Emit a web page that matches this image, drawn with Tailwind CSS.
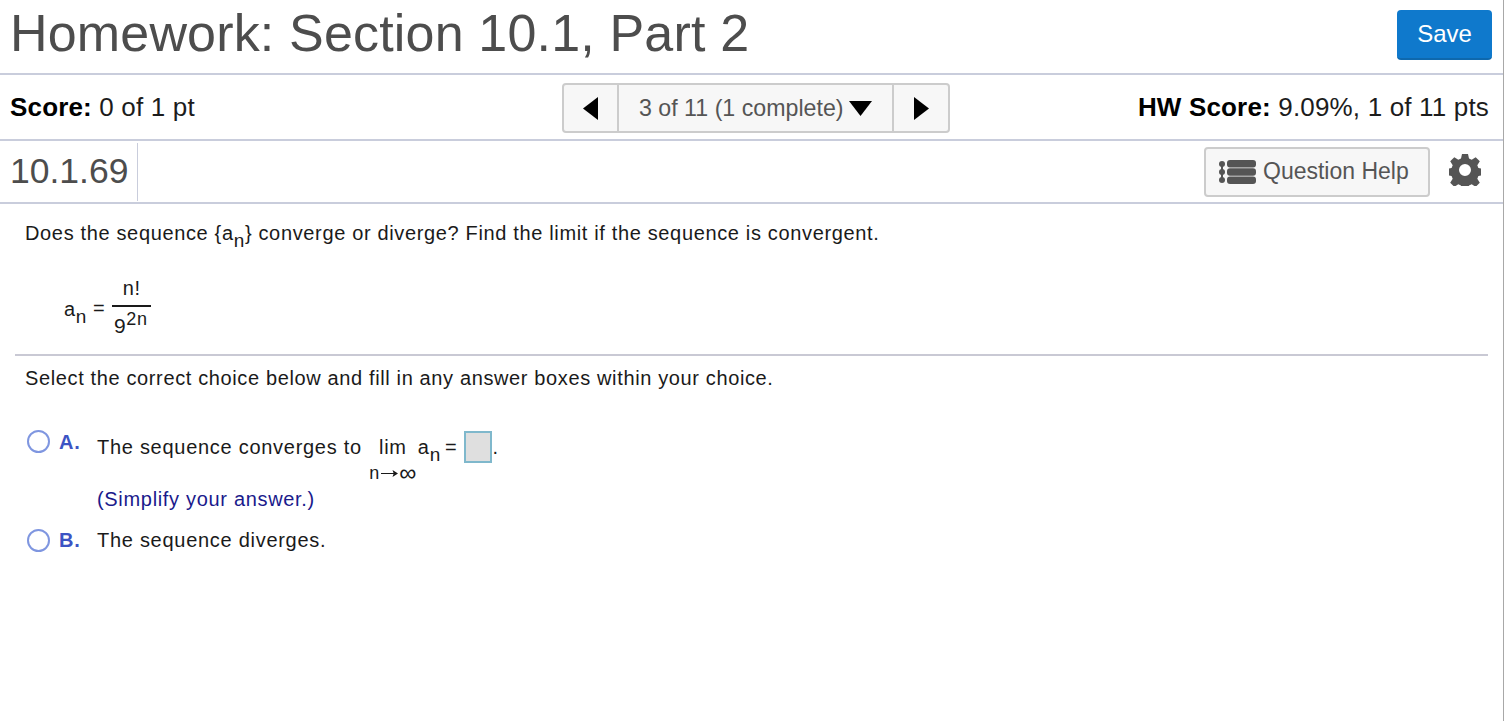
<!DOCTYPE html>
<html lang="en">
<head>
    <meta charset="UTF-8">
    <title>Homework: Section 10.1, Part 2</title>
    <script src="https://cdn.jsdelivr.net/npm/@tailwindcss/browser@4"></script>
</head>
<body class="bg-white h-[721px] overflow-hidden font-['Liberation_Sans',Arial,sans-serif] text-[#1a1a1a]">
    <div class="border-r border-[#a8a8a8] h-full">
        <!-- title bar -->
        <div class="h-[75px] border-b-2 border-[#c9cddc] flex items-center justify-between pl-[10px] pr-[11px]">
            <h1 class="text-[52px] leading-[66px] tracking-[0.17px] text-[#4d4d4d] -mt-[8px]">Homework: Section 10.1, Part 2</h1>
            <button class="w-[95px] h-[50px] -mt-[4px] rounded-[4px] bg-[#0f79cc] border-b-2 border-[#0e68ad] text-white text-[24px]">Save</button>
        </div>

        <!-- score bar -->
        <div class="h-[66px] border-b-2 border-[#c9cddc] flex items-center justify-between pl-[10px] pr-[14px] pt-[1px] text-[26px] tracking-[0.17px] text-[#1c1c1c] relative">
            <div><b class="text-black">Score:</b> 0 of 1 pt</div>
            <div class="absolute left-[562px] top-[8px] w-[388px] h-[50px] flex border-2 border-[#cccccc] rounded-[4px] bg-[#f7f7f7] text-[#555555] text-[23.2px] tracking-normal">
                <div class="w-[55px] flex items-center justify-center border-r-2 border-[#cccccc]">
                    <svg width="15" height="23" viewBox="0 0 15 23"><path d="M15 0v23L0 11.500z" fill="#000"/></svg>
                </div>
                <div class="w-[275px] flex items-center gap-[5px] pl-[20px] border-r-2 border-[#cccccc]">
                    <span>3 of 11 (1 complete)</span>
                    <svg width="23" height="15" viewBox="0 0 23 15"><path d="M0 0h23L11.500 15z" fill="#000"/></svg>
                </div>
                <div class="flex-1 flex items-center justify-center">
                    <svg width="15" height="23" viewBox="0 0 15 23"><path d="M0 0v23l15-11.500z" fill="#000"/></svg>
                </div>
            </div>
            <div><b class="text-black">HW Score:</b> 9.09%, 1 of 11 pts</div>
        </div>

        <!-- question bar -->
        <div class="h-[63px] border-b-2 border-[#c9cddc] flex items-center justify-between pl-[10px] pr-[22px]">
            <div class="h-[58px] pr-[9px] border-r border-[#c9cddc] flex items-center text-[35.5px] text-[#4d4d4d]">10.1.69</div>
            <div class="flex items-center gap-[19px]">
                <button class="w-[226px] h-[50px] flex items-center gap-[7px] pl-[13px] border-2 border-[#cccccc] rounded-[4px] bg-[#f7f7f7] text-[23px] text-[#555555]">
                    <svg width="37" height="24" viewBox="0 0 37 24" fill="#555555"><rect x="2" y="4" width="2" height="16"/><circle cx="3" cy="4" r="3"/><circle cx="3" cy="12" r="3"/><circle cx="3" cy="20" r="3"/><rect x="8" y="0" width="29" height="7.500" rx="3"/><rect x="8" y="8.300" width="29" height="7.400" rx="3"/><rect x="8" y="16.500" width="29" height="7.500" rx="3"/></svg>
                    <span>Question Help</span>
                </button>
                <svg class="-mt-[4px]" width="32" height="32" viewBox="0 0 32 32" fill="#555555"><path fill-rule="evenodd" d="M13 0h6l1 4.600 2.700 1.100 4-2.500 4.100 4.100-2.500 4 1.100 2.700 4.600 1v6l-4.600 1-1.100 2.700 2.500 4-4.100 4.100-4-2.500-2.700 1.100-1 4.600h-6l-1-4.600-2.700-1.100-4 2.500-4.100-4.100 2.500-4-1.100-2.700-4.600-1v-6l4.600-1 1.100-2.700-2.500-4 4.100-4.100 4 2.500 2.700-1.100zM16 10a6 6 0 1 0 0 12 6 6 0 0 0 0-12z"/></svg>
            </div>
        </div>

        <!-- question -->
        <div class="pt-[16px] text-[20px] leading-[26px] tracking-[0.63px] text-[#1a1a1a]">
            <p class="pl-[25px] tracking-[0.65px]">Does the sequence {a<sub class="text-[19px] relative top-[7px] leading-none align-baseline">n</sub>} converge or diverge? Find the limit if the sequence is convergent.</p>

            <div class="pl-[64px] mt-[25px] h-[70px] flex items-start gap-[6px]">
                <span class="mt-[25px]">a<sub class="text-[19px] relative top-[7px] leading-none align-baseline">n</sub></span>
                <span class="mt-[24px]">=</span>
                <div class="flex flex-col items-center w-[39px] ml-[1px]">
                    <div class="w-full text-center border-b-2 border-[#1a1a1a] h-[36px] leading-[34px]">n!</div>
                    <div class="leading-[26px] h-[28px] whitespace-nowrap -ml-[2px]"><span class="text-[21px] relative top-[6px]">9</span><span class="text-[18px] relative -top-[2px]">2n</span></div>
                </div>
            </div>

            <div class="mx-[15px] mt-[13px] border-t-2 border-[#c9c9d4]"></div>

            <p class="pl-[25px] mt-[9px]">Select the correct choice below and fill in any answer boxes within your choice.</p>

            <div class="flex mt-[39px] pl-[27px] tracking-[0.72px]">
                <span class="w-[23px] h-[23px] mt-[0px] rounded-full border-2 border-[#7f96e0]"></span>
                <b class="w-[47px] pl-[9px] text-[#3c54c4] leading-[24px]">A.</b>
                <div>
                    <div class="flex items-start h-[56px] pt-[4px]">
                        <span>The sequence converges to</span>
                        <div class="w-[48px] ml-[7px] flex flex-col items-center">
                            <span>lim</span>
                            <div class="flex items-center h-[26px] text-[18px] tracking-normal whitespace-nowrap">
                                <span>n</span>
                                <svg class="ml-[2px] mt-[1px]" width="17" height="9" viewBox="0 0 17 9" fill="#1a1a1a"><path d="M0 4h13v1H0z"/><path d="M17 4.500 11.500 1l1.200 3.500-1.200 3.500z"/></svg>
                                <span class="ml-[1px] text-[24px] leading-none">∞</span>
                            </div>
                        </div>
                        <span class="ml-[1px]">a<sub class="text-[19px] relative top-[7px] leading-none align-baseline">n</sub></span>
                        <span class="ml-[4px]">=</span>
                        <span class="w-[28px] h-[32px] ml-[7px] -mt-[3px] bg-[#dfdfdf] border-2 border-[#7fb8cc]"></span>
                        <span>.</span>
                    </div>
                    <p class="text-[#1a1a8c] tracking-[0.68px]">(Simplify your answer.)</p>
                </div>
            </div>

            <div class="flex mt-[15px] pl-[27px] tracking-[0.72px]">
                <span class="w-[23px] h-[23px] mt-[2px] rounded-full border-2 border-[#7f96e0]"></span>
                <b class="w-[47px] pl-[9px] text-[#3c54c4]">B.</b>
                <span>The sequence diverges.</span>
            </div>
        </div>
    </div>
</body>
</html>
